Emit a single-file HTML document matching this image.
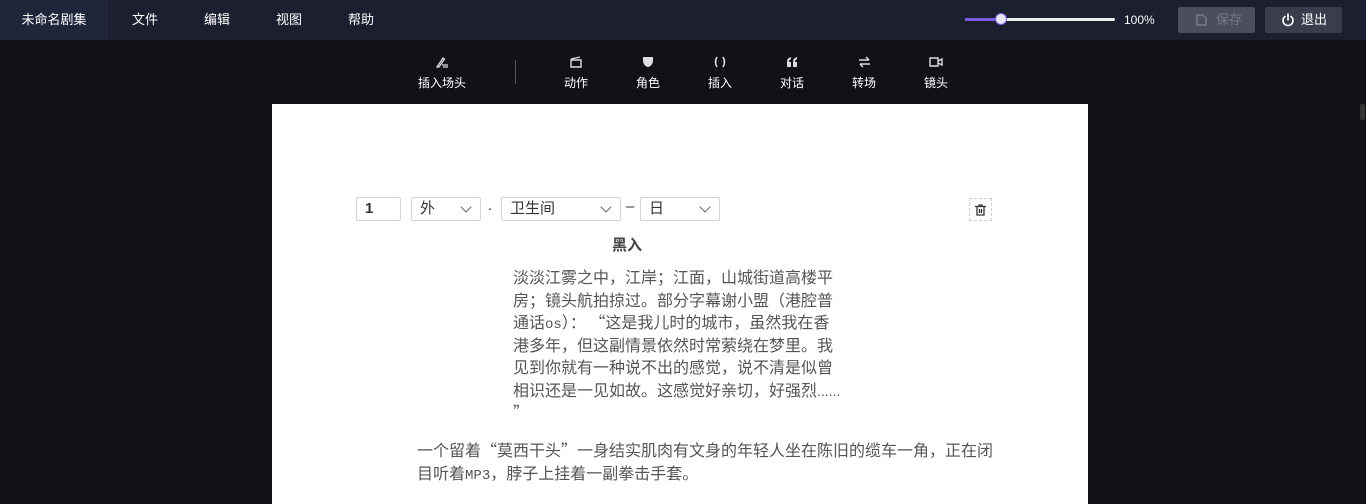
<!DOCTYPE html>
<html><head><meta charset="utf-8"><style>
*{margin:0;padding:0;box-sizing:border-box}
body{width:1366px;height:501px;overflow:hidden;background:#111217;font-family:"Liberation Sans","Noto Sans CJK SC",sans-serif;position:relative}
.top{position:absolute;left:0;top:0;width:1366px;height:40px;background:#1b1f2f}
.menu{position:absolute;top:0;height:40px;line-height:40px;color:#fff;font-size:13px}
.tb{position:absolute;top:56px;width:60px;text-align:center;color:#fff;font-size:12px}
.tb svg{display:block;margin:0 auto 6px}
.page{position:absolute;left:272px;top:104px;width:816px;height:400px;background:#fff}
.box{position:absolute;top:197px;height:24px;border:1px solid #d4d4d4;border-radius:2px;font-size:15px;color:#333;line-height:22px;padding-left:8px}
.box .ch{position:absolute;right:10px;top:5px;width:8px;height:8px;border-right:1.3px solid #666;border-bottom:1.3px solid #666;transform:rotate(45deg)}
.txt{position:absolute;color:#555;font-size:16px;font-family:"Noto Sans CJK SC","Liberation Sans",sans-serif;white-space:nowrap}
.txt div{height:22.5px;line-height:22.5px}
.m{font-family:"Liberation Mono",monospace;font-size:14px;line-height:1}
.e{font-family:"Liberation Sans",sans-serif;font-size:14px;line-height:1}
</style></head><body>
<div class="top"></div>
<div class="menu" style="left:0;width:108px;background:#20263a;text-align:center">未命名剧集</div>
<div class="menu" style="left:132px">文件</div>
<div class="menu" style="left:204px">编辑</div>
<div class="menu" style="left:276px">视图</div>
<div class="menu" style="left:348px">帮助</div>
<div style="position:absolute;left:965px;top:18px;width:150px;height:3px;background:#eee;border-radius:2px"></div>
<div style="position:absolute;left:965px;top:18px;width:36px;height:3px;background:#7b5ce0;border-radius:2px"></div>
<div style="position:absolute;left:995px;top:13px;width:12px;height:12px;border-radius:50%;background:#e8e8f4;border:1px solid #7b5ce0"></div>
<div class="menu" style="left:1124px;font-size:12px">100%</div>
<div style="position:absolute;left:1178px;top:7px;width:77px;height:26px;background:#4b4f5d;border-radius:2px;color:#777a86;font-size:13px;line-height:26px;padding-left:38px">保存
<svg style="position:absolute;left:18px;top:7px" width="11" height="12" viewBox="0 0 11 12"><path d="M1 1h6l3 3v7H1z" fill="none" stroke="#777a86" stroke-width="1.5"/></svg></div>
<div style="position:absolute;left:1265px;top:7px;width:77px;height:26px;background:#3a3e4c;border-radius:2px;color:#fff;font-size:13px;line-height:26px;padding-left:36px">退出
<svg style="position:absolute;left:16px;top:6px" width="14" height="14" viewBox="0 0 14 14"><path d="M4 3.5A5 5 0 1 0 10 3.5M7 1v6" fill="none" stroke="#fff" stroke-width="1.6" stroke-linecap="round"/></svg></div>

<div class="tb" style="left:412px"><svg width="14" height="12" viewBox="0 0 14 12"><path d="M2 11L8 2l1.5 1L4 11zM7 9h6M8 11h5" stroke="#ddd" stroke-width="1.3" fill="none"/></svg>插入场头</div>
<div style="position:absolute;left:515px;top:60px;width:1px;height:24px;background:#555"></div>
<div class="tb" style="left:546px"><svg width="13" height="12" viewBox="0 0 13 12"><path d="M1 4h10v7H1zM1 3l9-2" stroke="#ddd" stroke-width="1.4" fill="none"/></svg>动作</div>
<div class="tb" style="left:618px"><svg width="12" height="12" viewBox="0 0 12 12"><path d="M1 1h10v4c0 3-3 6-5 6S1 8 1 5z" fill="#ddd"/></svg>角色</div>
<div class="tb" style="left:690px"><svg width="14" height="12" viewBox="0 0 14 12"><path d="M4 1Q1 6 4 11M10 1q3 5 0 10" stroke="#ddd" stroke-width="1.6" fill="none"/></svg>插入</div>
<div class="tb" style="left:762px"><svg width="13" height="12" viewBox="0 0 13 12"><path d="M1 11V6q0-4 4-5v2q-2 1-2 3h2v5zM7 11V6q0-4 4-5v2q-2 1-2 3h2v5z" fill="#ddd"/></svg>对话</div>
<div class="tb" style="left:834px"><svg width="13" height="12" viewBox="0 0 13 12"><path d="M1 4h10M8 1l3 3M12 8H2M5 11L2 8" stroke="#ddd" stroke-width="1.5" fill="none"/></svg>转场</div>
<div class="tb" style="left:906px"><svg width="14" height="12" viewBox="0 0 14 12"><path d="M1 2h8v8H1zM9 5l4-2v6l-4-2" stroke="#ddd" stroke-width="1.4" fill="none"/></svg>镜头</div>
<div style="position:absolute;left:1360px;top:104px;width:5px;height:16px;background:#333;border-radius:2px"></div>

<div class="page"></div>
<div class="box" style="left:356px;width:45px;font-weight:bold">1</div>
<div class="box" style="left:411px;width:70px">外<span class="ch"></span></div>
<div style="position:absolute;left:488px;top:197px;font-size:15px;color:#333">.</div>
<div class="box" style="left:501px;width:120px">卫生间<span class="ch"></span></div>
<div style="position:absolute;left:626px;top:198px;font-size:15px;color:#333">–</div>
<div class="box" style="left:640px;width:80px">日<span class="ch"></span></div>
<div style="position:absolute;left:969px;top:198px;width:23px;height:23px;border:1px dashed #ccc"><svg style="position:absolute;left:5px;top:5px" width="11" height="12" viewBox="0 0 11 12"><path d="M0 2.5h11M4 2.5V1h3v1.5M2 2.5V11h7V2.5M4.5 5v4M6.5 5v4" stroke="#333" stroke-width="1.3" fill="none"/></svg></div>
<div style="position:absolute;left:612px;top:234px;font-size:15px;font-weight:bold;color:#444">黑入</div>
<div class="txt" style="left:513px;top:265px"><div>淡淡江雾之中，江岸；江面，山城街道高楼平</div><div>房；镜头航拍掠过。部分字幕谢小盟（港腔普</div><div>通话<span class="m">os</span>）： “这是我儿时的城市，虽然我在香</div><div>港多年，但这副情景依然时常萦绕在梦里。我</div><div>见到你就有一种说不出的感觉，说不清是似曾</div><div>相识还是一见如故。这感觉好亲切，好强烈<span class="e">......</span></div><div>”</div></div>
<div class="txt" style="left:417px;top:438px"><div>一个留着“莫西干头”一身结实肌肉有文身的年轻人坐在陈旧的缆车一角，正在闭</div><div>目听着<span class="m">MP3</span>，脖子上挂着一副拳击手套。</div></div>
</body></html>
